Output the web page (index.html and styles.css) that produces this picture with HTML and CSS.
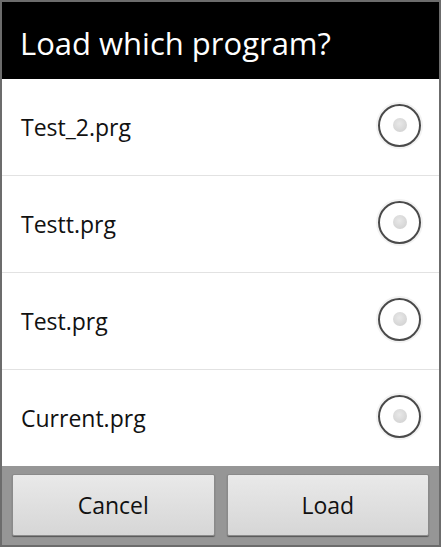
FILE: index.html
```html
<!DOCTYPE html>
<html>
  <head>
    <title>Load which program?</title>
    <link rel="stylesheet" href="styles.css">
  </head>
  <body>
    <div class="dialog">
      <div class="dialog-title">Load which program?</div>
      <ul class="program-list">
        <li class="program-row"><span>Test_2.prg</span><span class="radio"></span></li>
        <li class="program-row"><span>Testt.prg</span><span class="radio"></span></li>
        <li class="program-row"><span>Test.prg</span><span class="radio"></span></li>
        <li class="program-row"><span>Current.prg</span><span class="radio"></span></li>
      </ul>
      <div class="button-bar">
        <button class="dialog-button">Cancel</button>
        <button class="dialog-button">Load</button>
      </div>
    </div>
  </body>
</html>
```

FILE: styles.css
```css
/* Android-style alert dialog */
body {
  margin: 0;
  font-family: "Open Sans", "Noto Sans", sans-serif;
}
.dialog {
  width: 441px;
  height: 547px;
  box-sizing: border-box;
  border: 2px solid #6c6c6c;
  display: flex;
  flex-direction: column;
  background: #fff;
}
.dialog-title {
  height: 77px;
  box-sizing: border-box;
  background: #000;
  color: #fff;
  font-size: 31px;
  line-height: 44px;
  padding: 19px 0 0 18px;
}
.program-list {
  list-style: none;
  margin: 0;
  padding: 0;
}
.program-row {
  height: 96px;
  display: flex;
  align-items: center;
  justify-content: space-between;
  padding: 0 18px 0 19px;
  font-size: 23px;
  color: #111;
  border-bottom: 1px solid #e2e2e2;
}
.program-row:last-child {
  border-bottom: none;
}
.radio {
  width: 39px;
  height: 39px;
  margin-top: -4px;
  border: 2px solid #4a4a4a;
  border-radius: 50%;
  box-shadow: 0 0 0 2px #f2f2f2;
  display: flex;
  align-items: center;
  justify-content: center;
}
.radio::after {
  content: "";
  width: 14px;
  height: 14px;
  border-radius: 50%;
  background: radial-gradient(circle at 45% 40%, #e8e8e8, #cdcdcd);
}
.button-bar {
  flex: 1;
  background: #969696;
  display: flex;
  gap: 12px;
  padding: 8px 10px 7px;
}
.dialog-button {
  flex: 1;
  height: 62px;
  border: 1px solid #8a8a8a;
  border-radius: 2px;
  background: linear-gradient(#e9e9e9, #d6d6d6);
  box-shadow: 0 1px 1px #555;
  font-family: inherit;
  font-size: 23px;
  color: #111;
}
```
